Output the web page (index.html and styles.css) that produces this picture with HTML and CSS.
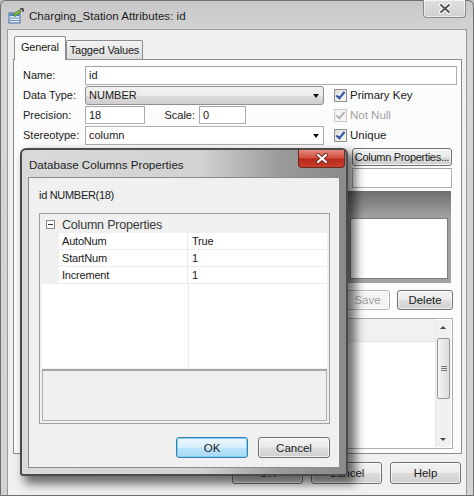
FILE: index.html
```html
<!DOCTYPE html>
<html>
<head>
<meta charset="utf-8">
<link rel="stylesheet" href="styles.css">
</head>
<body>
<div class="window">
  <div class="titlebar">
    <svg class="app-icon" width="16" height="16" viewBox="0 0 16 16">
      <rect x="1" y="5" width="11" height="10" fill="#dfe9f5" stroke="#3f6fa8"/>
      <rect x="1.5" y="5.5" width="10" height="2.5" fill="#4f86c6"/>
      <line x1="2" y1="10" x2="11" y2="10" stroke="#6d94c4"/>
      <line x1="2" y1="12.5" x2="11" y2="12.5" stroke="#6d94c4"/>
      <path d="M5 7 L11 2 L13 3.5 L7 8.5 Z" fill="#8fbf3f" stroke="#4c6b22" stroke-width="0.8"/>
      <path d="M12 1 L15 1 L15 4" fill="none" stroke="#333" stroke-width="1.4"/>
    </svg>
    <span class="title">Charging_Station Attributes: id</span>
    <div class="close-btn">
      <svg width="14" height="11" viewBox="0 0 14 11"><path d="M3 2 L11 9 M11 2 L3 9" stroke="#fff" stroke-width="4" stroke-linecap="round"/><path d="M3 2 L11 9 M11 2 L3 9" stroke="#555" stroke-width="2" stroke-linecap="round"/></svg>
    </div>
  </div>
  <div class="client">
    <div class="tabs">
      <div class="tab active">General</div>
      <div class="tab">Tagged Values</div>
    </div>
    <div class="panel">
      <div class="form">
        <label class="lbl">Name:</label>
        <div class="input wide">id</div>

        <label class="lbl">Data Type:</label>
        <div class="combo gray">NUMBER<span class="arrow"></span></div>
        <div class="check"><span class="box checked"></span>Primary Key</div>

        <label class="lbl">Precision:</label>
        <div class="prec-row">
          <div class="input small">18</div>
          <span class="scale-lbl">Scale:</span>
          <div class="input scale">0</div>
        </div>
        <div class="check disabled"><span class="box checked"></span>Not Null</div>

        <label class="lbl">Stereotype:</label>
        <div class="combo">column<span class="arrow"></span></div>
        <div class="check"><span class="box checked"></span>Unique</div>
      </div>
      <div class="lower">
        <div class="right-col">
          <div class="btn colprops">Column Properties...</div>
          <div class="input initial"></div>
          <div class="notes-box"><div class="notes"></div></div>
          <div class="btn-row">
            <div class="btn save disabled">Save</div>
            <div class="btn delete">Delete</div>
          </div>
          <div class="listbox">
            <div class="list-head"></div>
            <div class="vscroll">
              <span class="sb-up"></span>
              <span class="sb-thumb"><i></i><i></i><i></i></span>
              <span class="sb-down"></span>
            </div>
          </div>
        </div>
      </div>
    </div>
    <div class="bottom-buttons">
      <div class="btn main">OK</div>
      <div class="btn main">Cancel</div>
      <div class="btn main">Help</div>
    </div>
  </div>
</div>

<div class="dialog">
  <div class="dlg-title">
    <span>Database Columns Properties</span>
    <div class="dlg-close">
      <svg width="14" height="11" viewBox="0 0 14 11"><path d="M3 2 L11 9 M11 2 L3 9" stroke="#7a2a20" stroke-width="4" stroke-linecap="round"/><path d="M3 2 L11 9 M11 2 L3 9" stroke="#fff" stroke-width="2.2" stroke-linecap="round"/></svg>
    </div>
  </div>
  <div class="dlg-client">
    <div class="dlg-caption">id NUMBER(18)</div>
    <div class="pgrid">
      <div class="pg-rows">
        <div class="pg-cat"><span class="minus"></span>Column Properties</div>
        <div class="pg-row"><span class="pg-margin"></span><span class="pg-name">AutoNum</span><span class="pg-val">True</span></div>
        <div class="pg-row"><span class="pg-margin"></span><span class="pg-name">StartNum</span><span class="pg-val">1</span></div>
        <div class="pg-row"><span class="pg-margin"></span><span class="pg-name">Increment</span><span class="pg-val">1</span></div>
        <div class="pg-fill"><span class="pg-fill-l"></span><span class="pg-fill-r"></span></div>
      </div>
      <div class="pg-desc"></div>
    </div>
    <div class="dlg-buttons">
      <div class="btn dlg default">OK</div>
      <div class="btn dlg">Cancel</div>
    </div>
  </div>
</div>
</body>
</html>
```

FILE: styles.css
```css
html, body {
  margin: 0;
  padding: 0;
}
body {
  width: 474px;
  height: 496px;
  overflow: hidden;
  position: relative;
  font-family: "Liberation Sans", Arial, sans-serif;
  font-size: 11px;
  color: #1a1a1a;
  background: #bdbdbd;
}

.window {
  width: 474px;
  height: 496px;
  box-sizing: border-box;
  border: 1px solid #6f6f6f;
  border-radius: 6px 6px 0 0;
  background: linear-gradient(#c8c8c8, #d6d6d6 40px, #d2d2d2);
  display: flex;
  flex-direction: column;
}

.titlebar {
  height: 28px;
  flex: none;
  display: flex;
  align-items: center;
  padding-left: 7px;
  position: relative;
}
.app-icon { margin-right: 5px; margin-top: 1px; }
.title {
  font-size: 11.6px;
  color: #1c1c1c;
  margin-top: 1px;
}
.close-btn {
  position: absolute;
  right: 7px;
  top: -1px;
  width: 43px;
  height: 18px;
  box-sizing: border-box;
  border: 1px solid #8a8a8a;
  border-top: none;
  border-radius: 0 0 4px 4px;
  background: linear-gradient(#e0e0e0, #cfcfcf);
  box-shadow: inset 0 0 0 1px rgba(255,255,255,0.6);
  display: flex;
  align-items: center;
  justify-content: center;
}

.client {
  margin: 0 6px 0 6px;
  flex: 1;
  background: #f0f0f0;
  border: 1px solid #9a9a9a;
  border-bottom: none;
  padding: 6px 4px 0 5px;
  display: flex;
  flex-direction: column;
}

.tabs {
  display: flex;
  align-items: flex-end;
  height: 23px;
  padding-left: 1px;
  position: relative;
  z-index: 1;
}
.tab {
  border: 1px solid #898c95;
  border-bottom: none;
  background: linear-gradient(#f2f2f2, #dedede);
  padding: 0 3px;
  height: 18px;
  line-height: 18px;
  border-radius: 2px 2px 0 0;
  letter-spacing: -0.2px;
}
.tab.active {
  background: #fcfcfc;
  height: 23px;
  line-height: 21px;
  padding: 0 6px;
  margin-bottom: -1px;
}
.panel {
  border: 1px solid #898c95;
  background: #fcfcfc;
  height: 395px;
  box-sizing: border-box;
  padding: 5px 3px 0 9px;
  display: flex;
  flex-direction: column;
}

.form {
  display: grid;
  grid-template-columns: 62px 239px 133px;
  grid-auto-rows: 20px;
  column-gap: 0;
  align-items: center;
}
.lbl { align-self: center; }
.input {
  height: 18px;
  box-sizing: border-box;
  border: 1px solid #abadb3;
  border-top-color: #a0a3a9;
  background: #fff;
  padding-left: 3px;
  line-height: 16px;
}
.input.wide { grid-column: 2 / 4; height: 19px; }
.combo {
  height: 19px;
  box-sizing: border-box;
  border: 1px solid #abadb3;
  background: #fff;
  padding-left: 3px;
  line-height: 17px;
  position: relative;
}
.combo.gray {
  border-color: #8e8f8f;
  border-radius: 3px;
  background: linear-gradient(#f2f2f2 0%, #ebebeb 50%, #dddddd 51%, #cfcfcf 100%);
}
.arrow {
  position: absolute;
  right: 4px;
  top: 7px;
  width: 0;
  height: 0;
  border-left: 3.5px solid transparent;
  border-right: 3.5px solid transparent;
  border-top: 4px solid #111;
}
.check {
  display: flex;
  align-items: center;
  padding-left: 10px;
  font-size: 11.5px;
}
.check.disabled { color: #a0a0a0; }
.box {
  width: 11px;
  height: 11px;
  border: 1px solid #8f8f8f;
  background: linear-gradient(135deg, #dcdcdc, #fafafa);
  margin-right: 3px;
  position: relative;
  flex: none;
}
.box.checked::after {
  content: "";
  position: absolute;
  left: 3px;
  top: 0px;
  width: 3px;
  height: 7px;
  border-right: 2px solid #2a4f9e;
  border-bottom: 2px solid #2a4f9e;
  transform: rotate(40deg);
}
.check.disabled .box { border-color: #c8c8c8; background: #f4f4f4; }
.check.disabled .box.checked::after { border-color: #b5b5b5; }

.prec-row {
  display: flex;
  align-items: center;
}
.input.small { width: 60px; }
.scale-lbl { width: 54px; text-align: right; padding-right: 4px; box-sizing: border-box; }
.input.scale { width: 47px; }

.lower {
  flex: 1;
  display: flex;
  justify-content: flex-end;
}
.right-col {
  width: 113px;
  display: flex;
  flex-direction: column;
}
.btn {
  box-sizing: border-box;
  border: 1px solid #707070;
  border-radius: 3px;
  background: linear-gradient(#f2f2f2 0%, #ebebeb 48%, #dddddd 52%, #cfcfcf 100%);
  box-shadow: inset 0 0 0 1px rgba(255,255,255,0.7);
  text-align: center;
  display: flex;
  align-items: center;
  justify-content: center;
  font-size: 11.5px;
  white-space: nowrap;
}
.btn.colprops {
  width: 100px;
  height: 18px;
  margin: 3px 0 0 7px;
  font-size: 11px;
  letter-spacing: -0.3px;
}
.input.initial {
  width: 100px;
  height: 20px;
  margin: 2px 0 0 7px;
}
.notes-box {
  width: 104px;
  height: 92px;
  margin: 3px 0 0 2px;
  box-sizing: border-box;
  background: linear-gradient(#6e6e6e, #a0a0a0 25px, #a3a3a3);
  padding: 27px 3px 4px 3px;
}
.notes {
  height: 61px;
  background: #fff;
  border: 1px solid #7f7f7f;
  box-sizing: border-box;
}
.btn-row {
  display: flex;
  gap: 7px;
  margin-top: 7px;
}
.btn.save { width: 45px; height: 20px; }
.btn.delete { width: 56px; height: 20px; }
.btn.disabled {
  color: #a0a0a0;
  border-color: #b5b5b5;
  background: #f4f4f4;
}
.listbox {
  margin: 8px 0 0 2px;
  width: 106px;
  height: 131px;
  box-sizing: border-box;
  border: 1px solid #abadb3;
  background: #fff;
  position: relative;
}
.list-head {
  height: 22px;
  background: #f1f1f1;
  border-bottom: 1px solid #e5e5e5;
  margin-right: 16px;
}
.vscroll {
  position: absolute;
  right: 1px;
  top: 1px;
  bottom: 1px;
  width: 15px;
  background: #f0f0f0;
  border-left: 1px solid #e8e8e8;
}
.sb-up, .sb-down {
  position: absolute;
  left: 4px;
  width: 0;
  height: 0;
  border-left: 3px solid transparent;
  border-right: 3px solid transparent;
}
.sb-up { top: 6px; border-bottom: 3px solid #444; }
.sb-down { bottom: 6px; border-top: 3px solid #444; }
.sb-thumb {
  position: absolute;
  left: 1px;
  right: 1px;
  top: 18px;
  height: 61px;
  border: 1px solid #979797;
  border-radius: 2px;
  background: linear-gradient(90deg, #f4f4f4, #dcdcdc);
  box-sizing: border-box;
  display: flex;
  flex-direction: column;
  align-items: center;
  justify-content: center;
  gap: 1px;
}
.sb-thumb i {
  display: block;
  width: 6px;
  height: 1px;
  background: #777;
}

.bottom-buttons {
  display: flex;
  justify-content: flex-end;
  gap: 8px;
  margin-top: 8px;
  padding-right: 1px;
}
.btn.main {
  width: 71px;
  height: 22px;
  font-size: 11.5px;
}

/* Dialog overlay */
.dialog {
  position: absolute;
  left: 20px;
  top: 148px;
  width: 328px;
  height: 328px;
  box-sizing: border-box;
  border: 2px solid #4b4b4b;
  border-radius: 6px 6px 3px 3px;
  background: linear-gradient(90deg, #d9d9d9 0%, #d2d2d2 55%, #9a9a9a 80%, #8a8a8a 100%);
  box-shadow: 6px 6px 10px 2px rgba(0,0,0,0.55);
  display: flex;
  flex-direction: column;
  padding: 0 6px 6px 6px;
}
.dlg-title {
  height: 27px;
  flex: none;
  display: flex;
  align-items: center;
  padding-left: 1px;
  position: relative;
}
.dlg-title span {
  font-size: 11.6px;
  color: #1c1c1c;
  margin-top: 1px;
}
.dlg-close {
  position: absolute;
  right: -5px;
  top: 0;
  width: 47px;
  height: 18px;
  box-sizing: border-box;
  border: 1px solid #6b2a22;
  border-top: none;
  border-radius: 0 0 4px 4px;
  background: linear-gradient(#e58c80 0%, #d4503e 45%, #b8291a 55%, #c8402c 100%);
  display: flex;
  align-items: center;
  justify-content: center;
}
.dlg-client {
  flex: 1;
  background: #f0f0f0;
  border: 1px solid #8a8a8a;
  padding: 0 9px 0 10px;
  display: flex;
  flex-direction: column;
}
.dlg-caption {
  height: 35px;
  line-height: 34px;
  padding-left: 0;
  font-size: 11px;
  letter-spacing: -0.3px;
}
.pgrid {
  width: 291px;
  height: 211px;
  margin-left: 0;
  box-sizing: border-box;
  border: 1px solid #a0a0a0;
  background: #f0f0f0;
  display: flex;
  flex-direction: column;
  padding: 2px;
}
.pg-rows {
  height: 152px;
  background: #fff;
  display: flex;
  flex-direction: column;
  font-size: 11px;
  letter-spacing: -0.2px;
}
.pg-cat {
  height: 17px;
  flex: none;
  background: #f0f0f0;
  display: flex;
  align-items: center;
  font-size: 12.5px;
  color: #3a3a3a;
}
.minus {
  width: 7px;
  height: 7px;
  border: 1px solid #8a8a8a;
  background: #fff;
  margin: 0 7px 0 4px;
  position: relative;
}
.minus::after {
  content: "";
  position: absolute;
  left: 1px;
  right: 1px;
  top: 3px;
  height: 1px;
  background: #333;
}
.pg-row {
  height: 17px;
  flex: none;
  display: flex;
}
.pg-margin {
  width: 17px;
  background: #f0f0f0;
  flex: none;
}
.pg-name {
  width: 129px;
  flex: none;
  padding-left: 3px;
  box-sizing: border-box;
  border-bottom: 1px solid #ececec;
  border-right: 1px solid #ececec;
  line-height: 16px;
}
.pg-val {
  flex: 1;
  padding-left: 4px;
  border-bottom: 1px solid #ececec;
  line-height: 16px;
}
.pg-fill {
  flex: 1;
  display: flex;
}
.pg-fill-l {
  width: 146px;
  border-right: 1px solid #ececec;
}
.pg-desc {
  flex: 1;
  margin-top: 1px;
  border: 1px solid #b0b0b0;
  border-top: 2px solid #a5a5a5;
  background: #f0f0f0;
}
.dlg-buttons {
  display: flex;
  justify-content: flex-end;
  gap: 10px;
  margin-top: 13px;
  padding-right: 0;
}
.btn.dlg {
  width: 72px;
  height: 21px;
  font-size: 11.5px;
}
.btn.dlg.default {
  border-color: #3c7fb1;
  background: linear-gradient(#eaf6fd 0%, #d9f0fc 48%, #bee6fd 52%, #a7d9f5 100%);
  box-shadow: inset 0 0 0 1px #7fd0f5;
}
```
